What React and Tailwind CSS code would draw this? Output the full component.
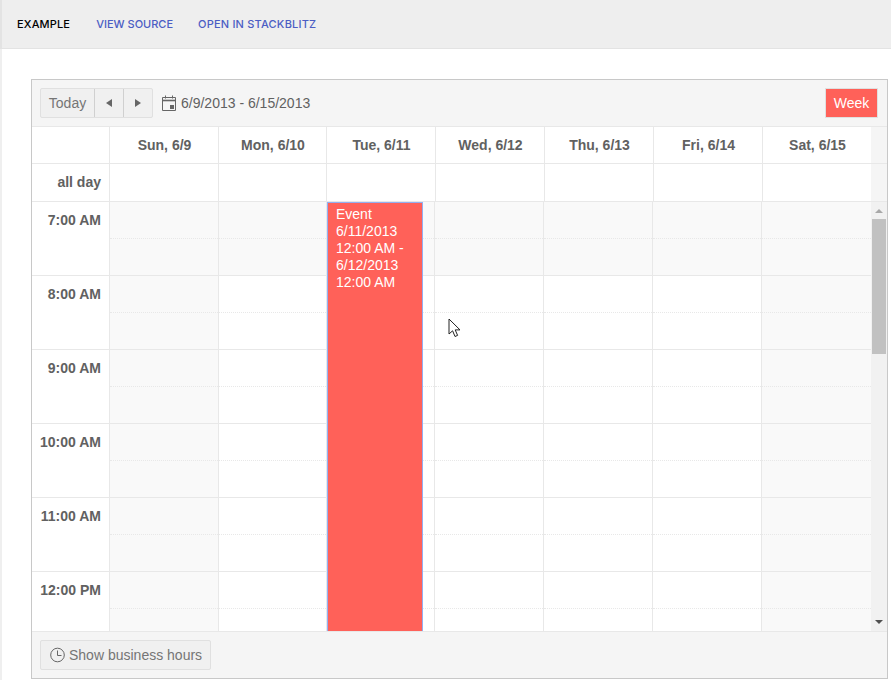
const days = ['Sun, 6/9', 'Mon, 6/10', 'Tue, 6/11', 'Wed, 6/12', 'Thu, 6/13', 'Fri, 6/14', 'Sat, 6/15'];
const hours = ['7:00 AM', '8:00 AM', '9:00 AM', '10:00 AM', '11:00 AM', '12:00 PM'];

const headerWidths = ['w-[109px]', 'w-[108px]', 'w-[109px]', 'w-[109px]', 'w-[109px]', 'w-[109px]', 'w-[108px]'];
const bodyWidths = ['w-[109px]', 'w-[108px]', 'w-[108px]', 'w-[109px]', 'w-[109px]', 'w-[109px]', 'w-[109px]'];

function Caret({ dir }) {
  return (
    <svg width="8" height="8" viewBox="0 0 8 8" className="fill-[#666]">
      <path d={dir === 'left' ? 'M7 0v8L1 4z' : 'M1 0v8l6-4z'} />
    </svg>
  );
}

function CalendarIcon() {
  return (
    <svg width="16" height="16" viewBox="0 0 16 16" fill="none" stroke="#666" className="ml-[8px] mr-[4px]">
      <path d="M1.5 2.5h13v13h-13z" />
      <path d="M1.5 5.5h13" strokeWidth="1.6" />
      <path d="M4.5 0.5v3M11.5 0.5v3" />
      <rect x="9" y="10" width="4" height="4" fill="#666" stroke="none" />
    </svg>
  );
}

function ClockIcon() {
  return (
    <svg width="16" height="16" viewBox="0 0 16 16" fill="none" stroke="#666" className="mr-[3px]">
      <circle cx="7.5" cy="8" r="6.8" />
      <path d="M7.5 3.5V8.5H11.5" />
    </svg>
  );
}

function HeaderRow({ cells, className }) {
  return (
    <div className={`flex border-b border-[#e8e8e8] bg-white ${className}`}>
      <div className="w-[78px] shrink-0 border-r border-[#e8e8e8] pr-2 text-right font-bold text-[#616161] leading-[36px]">
        {cells === days ? '' : 'all day'}
      </div>
      {days.map((d, i) => (
        <div key={d} className={`${headerWidths[i]} shrink-0 pl-px text-center font-bold text-[#616161] leading-[36px] ${i < 6 ? 'border-r border-[#e8e8e8]' : ''}`}>
          {cells === days ? d : ''}
        </div>
      ))}
      <div className="w-[16px] shrink-0 bg-[#f5f5f5]" />
    </div>
  );
}

function HourRow({ label, index }) {
  return (
    <div className="flex h-[74px]">
      <div className="w-[78px] shrink-0 border-r border-b border-[#e8e8e8] pr-2 pt-[10px] text-right font-bold text-[#616161] leading-4">
        {label}
      </div>
      {days.map((d, i) => {
        const off = i === 0 || i === 6 || index === 0;
        return (
          <div key={d} className={`${bodyWidths[i]} shrink-0 border-r border-b border-[#e8e8e8] last:border-r-0 ${off ? 'bg-[#f9f9f9]' : 'bg-white'}`}>
            <div className="h-[37px] border-b border-dotted border-[#e8e8e8]" />
          </div>
        );
      })}
    </div>
  );
}

export default function App() {
  return (
    <div className="h-[680px] overflow-hidden bg-white font-['Liberation_Sans',sans-serif] text-[14px] text-[#616161]">
      <div className="flex h-[49px] items-center border-b border-l-2 border-[#e3e3e3] bg-[#eeeeee] pl-[15px] font-['Inter',sans-serif] text-[11px] font-medium uppercase">
        <span className="tracking-[0.15px] text-black">Example</span>
        <span className="ml-[26px] text-[#4b5dc4]">View Source</span>
        <span className="ml-[25px] tracking-[0.2px] text-[#4b5dc4]">Open in StackBlitz</span>
      </div>
      <div className="h-[631px] border-l-2 border-[#efefef] pl-[29px] pt-[30px]">
        <div className="flex h-[600px] w-[857px] flex-col border border-[#c8c8c8]">
          <div className="flex h-[47px] shrink-0 items-center justify-between border-b border-[#e8e8e8] bg-[#f5f5f5] pl-2 pr-[9px]">
            <div className="flex items-center">
              <div className="flex h-[30px] items-center rounded-[2px] border border-[#e0e0e0] bg-[#f0f0f0]">
                <span className="flex h-full w-[54px] items-center justify-center border-r border-[#d0d0d0] text-[#757575]">Today</span>
                <span className="flex h-full w-[29px] items-center justify-center border-r border-[#d0d0d0]"><Caret dir="left" /></span>
                <span className="flex h-full w-[28px] items-center justify-center"><Caret dir="right" /></span>
              </div>
              <CalendarIcon />
              <span>6/9/2013 - 6/15/2013</span>
            </div>
            <span className="flex h-[30px] w-[53px] items-center justify-center border border-[#e0e0e0] bg-[#ff6159] text-white">Week</span>
          </div>

          <HeaderRow cells={days} className="h-[37px] shrink-0" />
          <HeaderRow cells={null} className="h-[38px] shrink-0" />

          <div className="relative flex min-h-0 flex-1 overflow-hidden">
            <div className="min-w-0 flex-1">
              {hours.map((h, i) => (
                <HourRow key={h} label={h} index={i} />
              ))}
            </div>
            <div className="relative flex w-[16px] shrink-0 flex-col items-center bg-[#f1f1f1]">
              <svg width="8" height="4" viewBox="0 0 8 4" className="mt-[7px] fill-[#a8a8a8]"><path d="M0 4 4 0l4 4z" /></svg>
              <div className="mt-[6px] h-[135px] w-[14px] bg-[#c1c1c1]" />
              <svg width="8" height="4" viewBox="0 0 8 4" className="absolute bottom-[7px] fill-[#505050]"><path d="M0 0h8L4 4z" /></svg>
            </div>
            <div className="absolute bottom-0 left-[295px] top-0 w-[96px] border-x border-t border-[#93aef0] bg-[#ff6159] pl-2 pt-[3px] leading-[17px] text-white">
              Event<br />6/11/2013<br />12:00 AM -<br />6/12/2013<br />12:00 AM
            </div>
            <svg width="13" height="20" viewBox="0 0 13 20" className="absolute left-[416px] top-[116px]">
              <path d="M1 1v15l3.6-3.2L7 18.5l2.6-1.1-2.4-5.5H12z" fill="#fff" stroke="#222" strokeWidth="1" />
            </svg>
          </div>

          <div className="flex h-[47px] shrink-0 items-center border-t border-[#e8e8e8] bg-[#f5f5f5] pl-2">
            <div className="flex h-[30px] w-[171px] items-center rounded-[2px] border border-[#e0e0e0] bg-[#f0f0f0] pl-[9px] text-[#757575]">
              <ClockIcon />
              Show business hours
            </div>
          </div>
        </div>
      </div>
    </div>
  );
}
